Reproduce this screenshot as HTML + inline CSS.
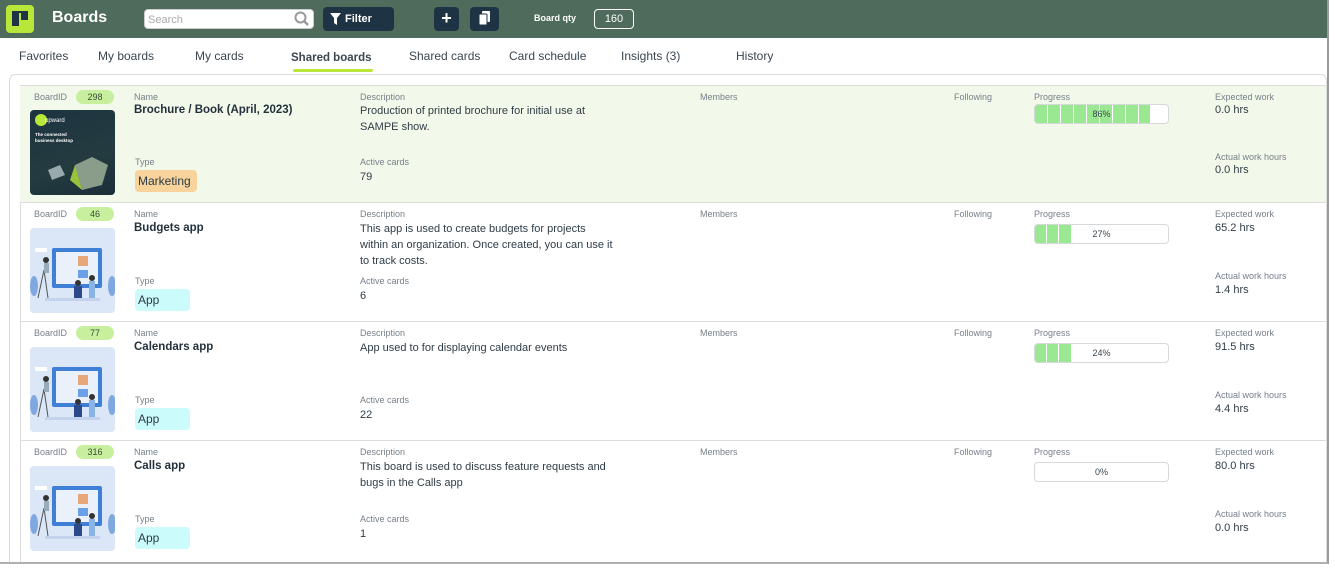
<!DOCTYPE html>
<html><head><meta charset="utf-8"><style>
*{box-sizing:border-box;margin:0;padding:0}
body{width:1335px;height:569px;background:#fff;font-family:"Liberation Sans",sans-serif;color:#2b3a45;position:relative;overflow:hidden}
.hdr{position:absolute;left:0;top:0;width:1328px;height:38px;background:#4e6b5b}
.abs{position:absolute}
.frame{position:absolute;left:0;top:0;width:1329px;height:564px;border-right:2px solid #9a9a9a;border-bottom:2px solid #b0b0b0}
.tab{position:absolute;top:49px;font-size:12px;color:#3a4650}
.lbl{position:absolute;font-size:9px;color:#76808a}
.val{position:absolute;font-size:11px;color:#2f3c46}
.name{position:absolute;font-size:11.5px;font-weight:bold;color:#22313c}
.pill{position:absolute;width:38px;height:14px;border-radius:7px;background:#c7ef9d;font-size:9px;text-align:center;line-height:14px;color:#3a4a3a}
.type{position:absolute;height:22px;border-radius:4px;font-size:12px;line-height:22px;padding-left:3px}
.prog{position:absolute;width:135px;height:20px;border:1px solid #d6d9db;border-radius:4px;overflow:hidden;background:#fff}
.prog .seg{position:absolute;top:0;height:18px;background:#9ae891;border-right:1.5px solid #fff}
.prog span{position:absolute;left:0;right:0;top:0;text-align:center;font-size:9px;line-height:18px;color:#3a4650}
.row{position:absolute;left:20px;width:1306px;height:119px;border-bottom:1px solid #dcdcdc}
</style></head><body>
<div class="hdr"></div>
<div class="abs" style="left:6px;top:5px;width:28px;height:28px;background:#b8e639;border-radius:4px"></div>
<div class="abs" style="left:12px;top:12px;width:7px;height:14px;background:#1e3344"></div>
<div class="abs" style="left:21px;top:12px;width:7px;height:8px;background:#1e3344"></div>
<div class="abs" style="left:12px;top:11px;width:16px;height:2px;background:#1e3344"></div>
<div class="abs" style="left:52px;top:9px;font-size:16px;font-weight:bold;color:#fff">Boards</div>
<div class="abs" style="left:144px;top:9px;width:170px;height:20px;background:#fff;border-radius:4px;border:1px solid #ccc;font-size:11px;color:#aaa;padding:4px 0 0 3px">Search</div>
<svg class="abs" style="left:294px;top:11px" width="16" height="16"><circle cx="6.5" cy="6.5" r="5" stroke="#999" stroke-width="2" fill="none"/><line x1="10" y1="10" x2="14" y2="14" stroke="#999" stroke-width="2.4"/></svg>
<div class="abs" style="left:323px;top:7px;width:71px;height:24px;background:#1e3344;border-radius:4px;color:#fff;font-size:11px;font-weight:bold;padding:6px 0 0 22px">Filter</div>
<svg class="abs" style="left:330px;top:13px" width="11" height="12"><path d="M0 0H11L7 5V12L4 10V5Z" fill="#fff"/></svg>
<div class="abs" style="left:434px;top:7px;width:25px;height:24px;background:#1e3344;border-radius:4px;color:#fff;font-size:18px;font-weight:bold;text-align:center;line-height:23px">+</div>
<div class="abs" style="left:470px;top:7px;width:29px;height:24px;background:#1e3344;border-radius:4px"></div>
<svg class="abs" style="left:478px;top:11px" width="13" height="16"><rect x="4" y="0" width="8" height="11" rx="1" fill="#fff"/><rect x="1" y="3" width="8" height="11" rx="1" fill="#fff" stroke="#1e3344"/></svg>
<div class="abs" style="left:534px;top:13px;font-size:9px;font-weight:bold;color:#fff">Board qty</div>
<div class="abs" style="left:594px;top:9px;width:40px;height:20px;border:1px solid #fff;border-radius:4px;color:#fff;font-size:11px;text-align:center;line-height:18px">160</div>

<div class="tab" style="left:19px">Favorites</div>
<div class="tab" style="left:98px">My boards</div>
<div class="tab" style="left:195px">My cards</div>
<div class="tab" style="left:291px;top:52px;font-weight:bold;font-size:11.5px">Shared boards</div>
<div class="abs" style="left:293px;top:69px;width:80px;height:3px;background:#b8e639;border-radius:2px"></div>
<div class="tab" style="left:409px">Shared cards</div>
<div class="tab" style="left:509px">Card schedule</div>
<div class="tab" style="left:621px">Insights (3)</div>
<div class="tab" style="left:736px">History</div>

<div class="abs" style="left:9px;top:74px;width:1318px;height:490px;border:1px solid #dcdcdc;border-radius:6px 6px 0 0"></div>
<div class="abs" style="left:20px;top:85px;width:1306px;height:478px;border-left:1px solid #dcdcdc;border-top:1px solid #dcdcdc"></div>

<div class="row" style="top:86px;height:117px;background:#f3f9ea"></div>
<div class="row" style="top:203px"></div>
<div class="row" style="top:322px"></div>
<div class="row" style="top:441px;border-bottom:none"></div>

<div id="rows"></div>

<div class="lbl" style="left:34px;top:92px">BoardID</div><div class="pill" style="left:76px;top:90px">298</div>
<div class="abs" style="left:30px;top:110px;width:85px;height:85px;border-radius:4px;background:linear-gradient(160deg,#1d3340,#243b40 60%,#1a2e38);overflow:hidden">
<svg width="85" height="85"><circle cx="11" cy="10" r="6" fill="#b8e639"/><text x="15" y="12" font-size="6" fill="#fff" font-family="Liberation Sans">ppward</text><text x="5" y="26" font-size="4.5" fill="#fff" font-family="Liberation Sans" font-weight="bold">The connected</text><text x="5" y="32" font-size="4.5" fill="#fff" font-family="Liberation Sans" font-weight="bold">business desktop</text><path d="M45 55L62 47L78 55L72 75L52 80Z" fill="#8a9c8a"/><path d="M45 55L52 80L40 70Z" fill="#b8e639" opacity=".8"/><path d="M18 60L30 55L35 65L22 70Z" fill="#9aa"/></svg></div>
<div class="lbl" style="left:134px;top:92px">Name</div><div class="name" style="left:134px;top:104px">Brochure / Book (April, 2023)</div>
<div class="lbl" style="left:135px;top:157px">Type</div><div class="type" style="left:135px;top:170px;width:62px;background:#f8d49c">Marketing</div>
<div class="lbl" style="left:360px;top:92px">Description</div><div class="val" style="left:360px;top:103px;line-height:16px;width:255px">Production of printed brochure for initial use at SAMPE show.</div>
<div class="lbl" style="left:360px;top:157px">Active cards</div><div class="val" style="left:360px;top:171px">79</div>
<div class="lbl" style="left:700px;top:92px">Members</div><div class="lbl" style="left:954px;top:92px">Following</div>
<div class="lbl" style="left:1034px;top:92px">Progress</div>
<div class="prog" style="left:1034px;top:104px"><div class="seg" style="left:0;width:13px"></div><div class="seg" style="left:13px;width:13px"></div><div class="seg" style="left:26px;width:13px"></div><div class="seg" style="left:39px;width:13px"></div><div class="seg" style="left:52px;width:13px"></div><div class="seg" style="left:65px;width:13px"></div><div class="seg" style="left:78px;width:13px"></div><div class="seg" style="left:91px;width:13px"></div><div class="seg" style="left:104px;width:11px;border:none"></div><span>86%</span></div>
<div class="lbl" style="left:1215px;top:92px">Expected work</div><div class="val" style="left:1215px;top:104px">0.0 hrs</div>
<div class="lbl" style="left:1215px;top:152px">Actual work hours</div><div class="val" style="left:1215px;top:164px">0.0 hrs</div>

<script>
var d=[[203,"46","Budgets app","This app is used to create budgets for projects within an organization. Once created, you can use it to track costs.","6",3,"27%","65.2 hrs","1.4 hrs"],
[322,"77","Calendars app","App used to for displaying calendar events","22",3,"24%","91.5 hrs","4.4 hrs"],
[441,"316","Calls app","This board is used to discuss feature requests and bugs in the Calls app","1",0,"0%","80.0 hrs","0.0 hrs"]];
var h="";
d.forEach(function(r){var t=r[0];var segs="";for(var i=0;i<r[5];i++)segs+='<div class="seg" style="left:'+(i*12)+'px;width:12px'+(i==r[5]-1?';border:none':'')+'"></div>';
h+='<div class="lbl" style="left:34px;top:'+(t+6)+'px">BoardID</div><div class="pill" style="left:76px;top:'+(t+4)+'px">'+r[1]+'</div>'+
'<div class="abs" style="left:30px;top:'+(t+25)+'px;width:85px;height:85px;border-radius:4px;background:#dbe6f7;overflow:hidden"><svg width="85" height="85"><rect x="22" y="20" width="50" height="40" rx="2" fill="#3f7fd6"/><rect x="26" y="24" width="42" height="32" fill="#eaf1fb"/><rect x="48" y="28" width="10" height="10" fill="#e8a77a"/><rect x="48" y="42" width="10" height="8" fill="#6aa0e8"/><rect x="5" y="20" width="12" height="4" fill="#fff"/><rect x="15" y="70" width="55" height="3" fill="#c3d3ee"/><path d="M8 70L14 42M18 70L14 42" stroke="#555" stroke-width="1"/><circle cx="16" cy="32" r="3" fill="#333"/><rect x="14" y="35" width="5" height="10" fill="#9ab"/><circle cx="48" cy="55" r="3" fill="#333"/><rect x="44" y="58" width="8" height="12" fill="#2a4a8a"/><circle cx="62" cy="50" r="3" fill="#333"/><rect x="59" y="53" width="6" height="17" fill="#8ab4e8"/><ellipse cx="4" cy="58" rx="4" ry="10" fill="#7fa8e0"/><ellipse cx="82" cy="58" rx="4" ry="10" fill="#7fa8e0"/></svg></div>'+
'<div class="lbl" style="left:134px;top:'+(t+6)+'px">Name</div><div class="name" style="left:134px;top:'+(t+19)+'px">'+r[2]+'</div>'+
'<div class="lbl" style="left:135px;top:'+(t+73)+'px">Type</div><div class="type" style="left:135px;top:'+(t+86)+'px;width:55px;background:#cbfbfb">App</div>'+
'<div class="lbl" style="left:360px;top:'+(t+6)+'px">Description</div><div class="val" style="left:360px;top:'+(t+18)+'px;line-height:16px;width:255px">'+r[3]+'</div>'+
'<div class="lbl" style="left:360px;top:'+(t+73)+'px">Active cards</div><div class="val" style="left:360px;top:'+(t+87)+'px">'+r[4]+'</div>'+
'<div class="lbl" style="left:700px;top:'+(t+6)+'px">Members</div><div class="lbl" style="left:954px;top:'+(t+6)+'px">Following</div>'+
'<div class="lbl" style="left:1034px;top:'+(t+6)+'px">Progress</div><div class="prog" style="left:1034px;top:'+(t+21)+'px">'+segs+'<span>'+r[6]+'</span></div>'+
'<div class="lbl" style="left:1215px;top:'+(t+6)+'px">Expected work</div><div class="val" style="left:1215px;top:'+(t+19)+'px">'+r[7]+'</div>'+
'<div class="lbl" style="left:1215px;top:'+(t+68)+'px">Actual work hours</div><div class="val" style="left:1215px;top:'+(t+81)+'px">'+r[8]+'</div>';});
document.getElementById("rows").innerHTML=h;
</script>
<div class="frame"></div>
</body></html>
